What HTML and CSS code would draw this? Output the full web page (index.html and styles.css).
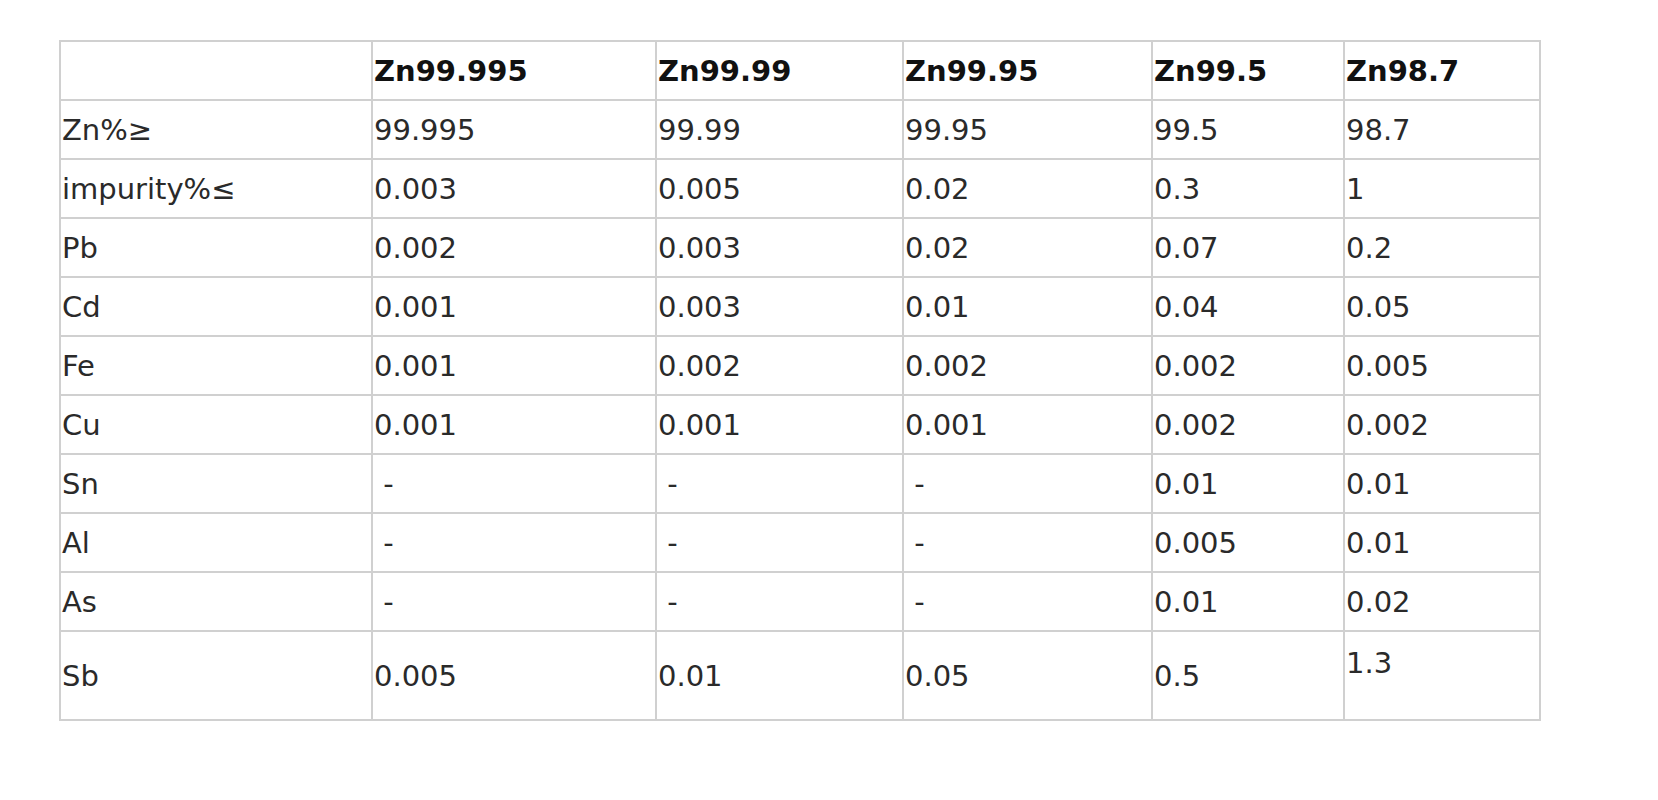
FILE: index.html
```html
<!DOCTYPE html>
<html>
<head>
<meta charset="utf-8">
<link rel="stylesheet" href="styles.css">
</head>
<body>
<div class="page">
<table class="spec">
<colgroup>
<col class="c1"><col class="c2"><col class="c3"><col class="c4"><col class="c5"><col class="c6">
</colgroup>
<tr class="head"><td></td><td>Zn99.995</td><td>Zn99.99</td><td>Zn99.95</td><td>Zn99.5</td><td>Zn98.7</td></tr>
<tr><td>Zn%≥</td><td>99.995</td><td>99.99</td><td>99.95</td><td>99.5</td><td>98.7</td></tr>
<tr><td>impurity%≤</td><td>0.003</td><td>0.005</td><td>0.02</td><td>0.3</td><td>1</td></tr>
<tr><td>Pb</td><td>0.002</td><td>0.003</td><td>0.02</td><td>0.07</td><td>0.2</td></tr>
<tr><td>Cd</td><td>0.001</td><td>0.003</td><td>0.01</td><td>0.04</td><td>0.05</td></tr>
<tr><td>Fe</td><td>0.001</td><td>0.002</td><td>0.002</td><td>0.002</td><td>0.005</td></tr>
<tr><td>Cu</td><td>0.001</td><td>0.001</td><td>0.001</td><td>0.002</td><td>0.002</td></tr>
<tr><td>Sn</td><td>&nbsp;-</td><td>&nbsp;-</td><td>&nbsp;-</td><td>0.01</td><td>0.01</td></tr>
<tr><td>Al</td><td>&nbsp;-</td><td>&nbsp;-</td><td>&nbsp;-</td><td>0.005</td><td>0.01</td></tr>
<tr><td>As</td><td>&nbsp;-</td><td>&nbsp;-</td><td>&nbsp;-</td><td>0.01</td><td>0.02</td></tr>
<tr class="last"><td>Sb</td><td>0.005</td><td>0.01</td><td>0.05</td><td>0.5</td><td class="raised">1.3</td></tr>
</table>
</div>
</body>
</html>
```

FILE: styles.css
```css
html, body {
  margin: 0;
  padding: 0;
  background: #ffffff;
}

.page {
  padding: 40px 0 0 59px;
}

.spec {
  border-collapse: collapse;
  table-layout: fixed;
  width: 1482px;
  font-family: "DejaVu Sans", Verdana, sans-serif;
  font-size: 29px;
  color: #2a2a2a;
}

.c1 { width: 312px; }
.c2 { width: 284px; }
.c3 { width: 247px; }
.c4 { width: 249px; }
.c5 { width: 192px; }
.c6 { width: 196px; }

.spec tr {
  height: 59px;
}

.spec td {
  border: 2px solid #d0d0d0;
  padding: 0 0 0 1px;
  vertical-align: middle;
  white-space: nowrap;
  line-height: 34px;
}

.spec .head {
  height: 59px;
}

.spec .head td {
  font-weight: bold;
  color: #111111;
}

.spec .last {
  height: 89px;
}

.spec .raised {
  padding-bottom: 26px;
}
```
